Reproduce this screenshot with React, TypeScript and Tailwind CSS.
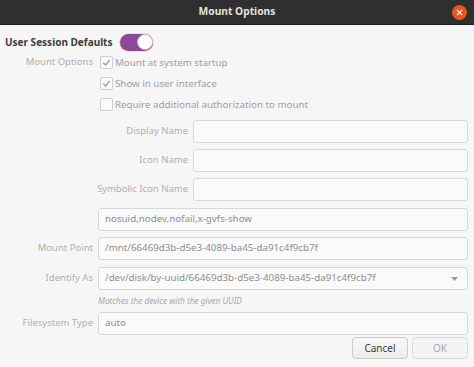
import React from 'react';

const font = { fontFamily: '"Noto Sans", "DejaVu Sans", sans-serif' };

const CheckRow = ({ checked, label }: { checked: boolean; label: string }) => (
  <div className="flex items-center h-[21px] gap-[2px]">
    <div className="w-[13px] h-[13px] ml-[2px] rounded-[2px] border border-[#cfcfcf] bg-[#fafafa] flex items-center justify-center">
      {checked && (
        <svg width="9" height="9" viewBox="0 0 9 9">
          <path d="M1.2 4.6 L3.6 7 L7.8 1.8" fill="none" stroke="#9a9a9a" strokeWidth="1.3" />
        </svg>
      )}
    </div>
    <span className="text-[9.75px] text-[#a0a0a0] leading-none">{label}</span>
  </div>
);

const Field = ({ value, className = '' }: { value?: string; className?: string }) => (
  <div
    className={`h-[23px] rounded-[3px] border border-[#d9d9d9] bg-[#fafafa] flex items-center px-[6px] text-[9.75px] text-[#8e8e8e] ${className}`}
  >
    {value}
  </div>
);

const Label = ({ text, className = '' }: { text: string; className?: string }) => (
  <div className={`h-[23px] flex items-center justify-end whitespace-nowrap text-[9.5px] text-[#b0b0b0] ${className}`}>
    {text}
  </div>
);

export default function App() {
  return (
    <div className="w-[474px] h-[367px] bg-[#f6f6f6] flex flex-col overflow-hidden" style={font}>
      {/* Title bar */}
      <div className="h-[25px] bg-[#2f2f2f] border-b border-[#1e1e1e] flex items-center justify-center relative shrink-0">
        <span className="text-[10.25px] font-bold text-[#e4e1dc]">Mount Options</span>
        <div className="absolute right-[7px] top-[5px] w-[15px] h-[15px] rounded-full bg-[#e8561f] flex items-center justify-center">
          <svg width="7" height="7" viewBox="0 0 7 7">
            <path d="M1 1 L6 6 M6 1 L1 6" stroke="#fbe6dd" strokeWidth="1.4" />
          </svg>
        </div>
      </div>

      <div className="flex flex-col pr-[6px]">
        {/* User session defaults */}
        <div className="flex items-center h-[18px] mt-[8px] pl-[5px] gap-[7px]">
          <span className="text-[10px] font-bold text-[#3c3c3c]">User Session Defaults</span>
          <div className="w-[35px] h-[19px] rounded-full bg-[#f7d9d2] p-[1px]">
            <div className="w-full h-full rounded-full bg-[#8a4a98] flex items-center justify-end">
              <div className="w-[16px] h-[16px] rounded-full bg-white border border-[#c9c0cc]" />
            </div>
          </div>
        </div>

        {/* Mount options grid */}
        <div className="grid grid-cols-[93px_1fr] gap-x-[5px] mt-[1px]">
          <Label text="Mount Options" className="!h-[21px]" />
          <div className="flex flex-col">
            <CheckRow checked label="Mount at system startup" />
            <CheckRow checked label="Show in user interface" />
            <CheckRow checked={false} label="Require additional authorization to mount" />

            <div className="grid grid-cols-[90px_1fr] gap-x-[5px] gap-y-[6px] mt-[5px]">
              <Label text="Display Name" />
              <Field />
              <Label text="Icon Name" />
              <Field />
              <Label text="Symbolic Icon Name" />
              <Field />
            </div>
            <Field value="nosuid,nodev,nofail,x-gvfs-show" className="mt-[7px]" />
          </div>

          <Label text="Mount Point" className="mt-[6px]" />
          <Field value="/mnt/66469d3b-d5e3-4089-ba45-da91c4f9cb7f" className="mt-[6px]" />

          <Label text="Identify As" className="mt-[7px]" />
          <div className="mt-[7px] h-[23px] rounded-[3px] border border-[#d9d9d9] bg-[#fafafa] flex items-center justify-between pl-[6px] pr-[9px] text-[9.75px] text-[#8e8e8e]">
            <span>/dev/disk/by-uuid/66469d3b-d5e3-4089-ba45-da91c4f9cb7f</span>
            <svg width="7" height="4" viewBox="0 0 7 4">
              <path d="M0 0 L7 0 L3.5 4 Z" fill="#9a9a9a" />
            </svg>
          </div>

          <div />
          <div className="h-[22px] flex items-center text-[8.25px] italic text-[#a8a8a8]">
            Matches the device with the given UUID
          </div>

          <Label text="Filesystem Type" />
          <Field value="auto" />
        </div>

        {/* Buttons */}
        <div className="flex justify-end gap-[4px] mt-[2px]">
          <div className="w-[56px] h-[22px] rounded-[4px] border border-[#cdc9c5] bg-gradient-to-b from-[#f8f8f8] to-[#ececec] flex items-center justify-center text-[10px] text-[#3c3c3c]">
            Cancel
          </div>
          <div className="w-[56px] h-[22px] rounded-[4px] border border-[#dcd8d4] bg-[#f4f4f4] flex items-center justify-center text-[10px] text-[#a8a8a8]">
            OK
          </div>
        </div>
      </div>
    </div>
  );
}
